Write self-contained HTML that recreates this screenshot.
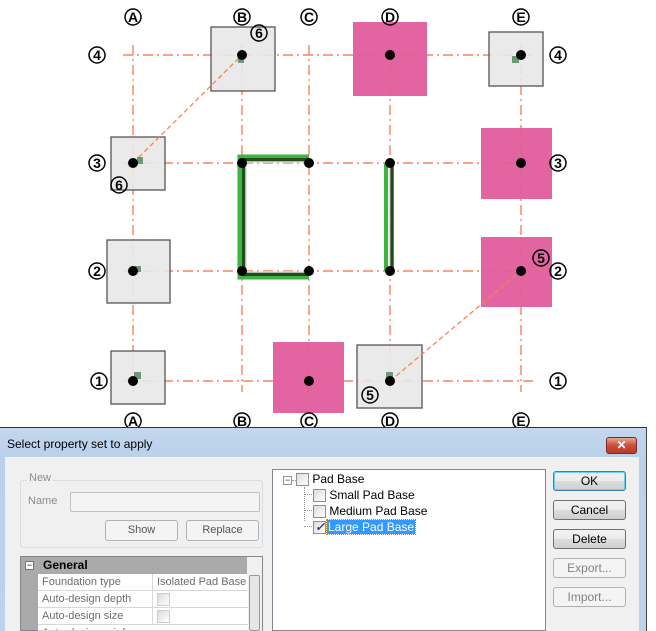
<!DOCTYPE html>
<html><head><style>
*{margin:0;padding:0;box-sizing:border-box}
html,body{width:656px;height:631px;overflow:hidden}
body{background:#fff;font-family:"Liberation Sans",sans-serif;position:relative}
.abs{position:absolute}
.btn{position:absolute;left:553px;width:73px;height:20px;border:1px solid #707070;border-radius:3px;background:linear-gradient(#f2f2f2,#ebebeb 50%,#dddddd 51%,#cfcfcf);font-size:12px;text-align:center;line-height:18px;color:#000}
.btn.dis{border-color:#adb2b5;background:#f4f4f4;color:#838383}
.cb{display:inline-block;width:13px;height:13px;border:1px solid #8f8f8f;background:linear-gradient(135deg,#dcdcdc,#fff);vertical-align:middle}
.tr{position:absolute;font-size:12px;height:16px;line-height:16px}
.row{position:absolute;left:38px;width:210px;height:17px;border-bottom:1px solid #d8d8d8;font-size:11px;color:#6d6d6d;line-height:17px;background:#fff}
.row span{position:absolute}
</style></head><body>
<svg class="abs" style="left:0;top:0" width="656" height="427" font-family="Liberation Sans" font-weight="bold">
<g stroke="#f4835f" stroke-width="1.4" stroke-dasharray="10,4,2,4">
<line x1="123" y1="55" x2="535" y2="55"/><line x1="123" y1="163" x2="535" y2="163"/>
<line x1="123" y1="271" x2="535" y2="271"/><line x1="123" y1="381" x2="535" y2="381"/>
<line x1="133" y1="45" x2="133" y2="392"/><line x1="242" y1="45" x2="242" y2="392"/>
<line x1="309" y1="45" x2="309" y2="392"/><line x1="390" y1="45" x2="390" y2="392"/>
<line x1="521" y1="45" x2="521" y2="392"/>
</g>
<g stroke="#555" stroke-width="1.3" fill="#e8e8e8" fill-opacity="0.9">
<rect x="211" y="27" width="64" height="64"/><rect x="489" y="32" width="54" height="54"/>
<rect x="111" y="137" width="54" height="53"/><rect x="107" y="240" width="63" height="63"/>
<rect x="111" y="351" width="54" height="53"/><rect x="357" y="345" width="65" height="63"/>
</g>
<g fill="#e05c9c" fill-opacity="0.95">
<rect x="353" y="22" width="74" height="74"/><rect x="481" y="128" width="71" height="71"/>
<rect x="481" y="237" width="71" height="70"/><rect x="273" y="342" width="71" height="71"/>
</g>
<g stroke="#f4835f" stroke-width="1.3" stroke-dasharray="5,3">
<line x1="133" y1="163" x2="242" y2="55"/><line x1="390" y1="381" x2="521" y2="271"/>
</g>
<g fill="#6a9a7a"><rect x="137" y="157" width="6" height="7"/><rect x="238" y="57" width="6" height="6"/><rect x="512" y="56" width="7" height="7"/><rect x="134" y="372" width="7" height="7"/><rect x="386" y="372" width="7" height="7"/><rect x="135" y="266" width="6" height="6"/></g>
<g fill="none">
<path d="M309 158 H241 V276 H309" stroke="#3fb23f" stroke-width="7"/>
<path d="M309 160 H244 V274 H309" stroke="#1d4f1d" stroke-width="4"/>
<path d="M309 162 H246 V272 H309" stroke="#ddd" stroke-width="1.5"/>
<line x1="386" y1="163" x2="386" y2="271" stroke="#3fb23f" stroke-width="4"/>
<line x1="392" y1="163" x2="392" y2="271" stroke="#1d4f1d" stroke-width="3.5"/>
<line x1="389.5" y1="165" x2="389.5" y2="269" stroke="#ddd" stroke-width="1.5"/>
</g>
<g fill="#000">
<circle cx="242" cy="55" r="5"/><circle cx="390" cy="55" r="5"/><circle cx="521" cy="55" r="5"/>
<circle cx="133" cy="163" r="5"/><circle cx="242" cy="163" r="5"/><circle cx="309" cy="163" r="5"/><circle cx="390" cy="163" r="5"/><circle cx="521" cy="163" r="5"/>
<circle cx="133" cy="271" r="5"/><circle cx="242" cy="271" r="5"/><circle cx="309" cy="271" r="5"/><circle cx="390" cy="271" r="5"/><circle cx="521" cy="271" r="5"/>
<circle cx="133" cy="381" r="5"/><circle cx="309" cy="381" r="5"/><circle cx="390" cy="381" r="5"/>
</g>
<g fill="none" stroke="#000" stroke-width="1.5">
<circle cx="133" cy="17" r="8"/><circle cx="242" cy="17" r="8"/><circle cx="309" cy="17" r="8"/><circle cx="390" cy="17" r="8"/><circle cx="521" cy="17" r="8"/>
<circle cx="133" cy="421" r="8"/><circle cx="242" cy="421" r="8"/><circle cx="309" cy="421" r="8"/><circle cx="390" cy="421" r="8"/><circle cx="521" cy="421" r="8"/>
<circle cx="97" cy="55" r="8"/><circle cx="97" cy="163" r="8"/><circle cx="97" cy="271" r="8"/><circle cx="99" cy="381" r="8"/>
<circle cx="558" cy="55" r="8"/><circle cx="558" cy="163" r="8"/><circle cx="558" cy="271" r="8"/><circle cx="558" cy="381" r="8"/>
<circle cx="259" cy="33" r="8"/><circle cx="119" cy="185" r="8"/><circle cx="541" cy="258" r="8"/><circle cx="370" cy="395" r="8"/>
</g>
<g font-size="14" text-anchor="middle">
<text x="133" y="22">A</text><text x="242" y="22">B</text><text x="309" y="22">C</text><text x="390" y="22">D</text><text x="521" y="22">E</text>
<text x="133" y="426">A</text><text x="242" y="426">B</text><text x="309" y="426">C</text><text x="390" y="426">D</text><text x="521" y="426">E</text>
<text x="97" y="60">4</text><text x="97" y="168">3</text><text x="97" y="276">2</text><text x="99" y="386">1</text>
<text x="558" y="60">4</text><text x="558" y="168">3</text><text x="558" y="276">2</text><text x="558" y="386">1</text>
<text x="259" y="38">6</text><text x="119" y="190">6</text><text x="541" y="263">5</text><text x="370" y="400">5</text>
</g>
</svg>
<div class="abs" style="left:0;top:427px;width:647px;height:204px;background:linear-gradient(#c3d7ed,#b9d1ea 30px,#bcd3ec);border-top:1px solid #333;border-right:1px solid #444"></div>
<div class="abs" style="left:7px;top:437px;font-size:12px;color:#000">Select property set to apply</div>
<div class="abs" style="left:606px;top:437px;width:31px;height:17px;border:1px solid #7a2a22;border-radius:3px;background:linear-gradient(#e8a493,#c9503c 50%,#b93a26);color:#fff;font-size:12px;font-weight:bold;text-align:center;line-height:15px">✕</div>
<div class="abs" style="left:5px;top:457px;width:634px;height:174px;background:#f0f0f0"></div>
<div class="abs" style="left:20px;top:480px;width:243px;height:68px;border:1px solid #d5dfe5;border-radius:3px"></div>
<div class="abs" style="left:27px;top:472px;font-size:11px;color:#8d8d8d;background:#f0f0f0;padding:0 2px">New</div>
<div class="abs" style="left:28px;top:495px;font-size:11px;color:#8d8d8d">Name</div>
<div class="abs" style="left:70px;top:492px;width:190px;height:20px;border:1px solid #c0c0c0;border-radius:2px;background:#f4f4f4"></div>
<div class="btn dis" style="left:105px;top:520px;width:73px;height:21px;color:#555;line-height:19px;font-size:11px">Show</div>
<div class="btn dis" style="left:186px;top:520px;width:73px;height:21px;color:#555;line-height:19px;font-size:11px">Replace</div>
<div class="abs" style="left:20px;top:556px;width:243px;height:75px;border:1px solid #828790;background:#aaa"></div>
<div class="abs" style="left:25px;top:561px;width:9px;height:9px;border:1px solid #777;background:#fff;font-size:9px;line-height:6px;text-align:center">−</div>
<div class="abs" style="left:43px;top:558px;font-size:12px;font-weight:bold">General</div>
<div class="abs" style="left:247px;top:557px;width:15px;height:74px;background:#f0f0f0"></div>
<div class="abs" style="left:249px;top:575px;width:11px;height:56px;border:1px solid #999;border-radius:2px;background:#e6e6e6"></div>
<div class="row" style="top:574px"><span style="left:4px">Foundation type</span><span style="left:114px;border-left:1px solid #d8d8d8;padding-left:4px;height:17px">Isolated Pad Base</span></div>
<div class="row" style="top:591px"><span style="left:4px">Auto-design depth</span><span style="left:114px;border-left:1px solid #d8d8d8;padding-left:4px;height:17px"><i class="cb" style="border-color:#ccc"></i></span></div>
<div class="row" style="top:608px"><span style="left:4px">Auto-design size</span><span style="left:114px;border-left:1px solid #d8d8d8;padding-left:4px;height:17px"><i class="cb" style="border-color:#ccc"></i></span></div>
<div class="row" style="top:625px;height:6px;overflow:hidden"><span style="left:4px">Auto-design reinf.</span></div>
<div class="abs" style="left:272px;top:469px;width:274px;height:162px;border:1px solid #828790;background:#fff"></div>
<div class="abs" style="left:283px;top:476px;width:9px;height:9px;border:1px solid #919191;font-size:9px;line-height:6px;text-align:center;color:#333">−</div>
<div class="abs" style="left:292px;top:480px;width:4px;border-top:1px dotted #999"></div>
<div class="abs" style="left:304px;top:487px;height:34px;border-left:1px dotted #999"></div>
<div class="abs" style="left:304px;top:494px;width:8px;border-top:1px dotted #999"></div>
<div class="abs" style="left:304px;top:510px;width:8px;border-top:1px dotted #999"></div>
<div class="abs" style="left:304px;top:526px;width:8px;border-top:1px dotted #999"></div>
<div class="tr" style="left:296px;top:471px"><i class="cb"></i> Pad Base</div>
<div class="tr" style="left:313px;top:487px"><i class="cb"></i> Small Pad Base</div>
<div class="tr" style="left:313px;top:503px"><i class="cb"></i> Medium Pad Base</div>
<div class="tr" style="left:313px;top:519px"><i class="cb" style="position:relative"><b style="position:absolute;left:1px;top:-3px;font-size:12px;color:#2b3f8f">✓</b></i><span style="background:#3399ff;color:#fff;outline:1px dotted #c80;padding:0 1px;margin-left:1px">Large Pad Base</span></div>
<div class="btn" style="top:471px;border-color:#3c7fb1;box-shadow:inset 0 0 0 1px #6fd0f5">OK</div>
<div class="btn" style="top:500px">Cancel</div>
<div class="btn" style="top:529px">Delete</div>
<div class="btn dis" style="top:558px">Export...</div>
<div class="btn dis" style="top:587px">Import...</div>
</body></html>
